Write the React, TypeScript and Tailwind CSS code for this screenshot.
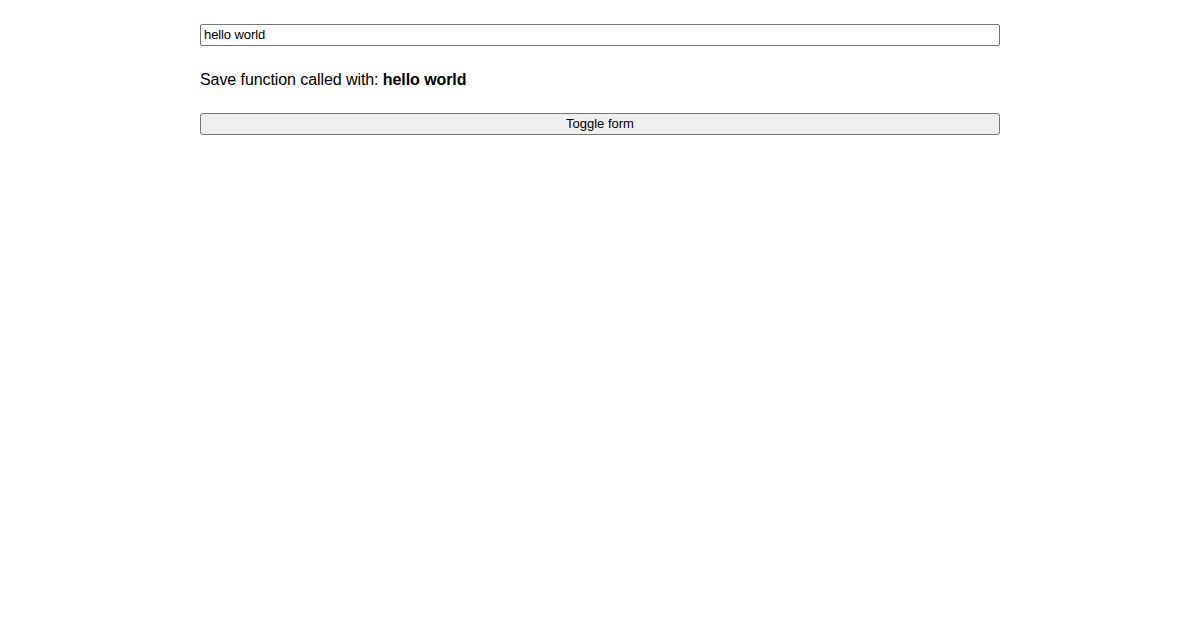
import { useState } from "react";

export default function App() {
  const [value, setValue] = useState("hello world");
  const [saved] = useState("hello world");
  const [show, setShow] = useState(true);

  return (
    <div className="w-[800px] mx-auto pt-6 font-['Liberation_Sans',Arial,sans-serif] text-black">
      {show && (
        <input
          type="text"
          value={value}
          onChange={(e) => setValue(e.target.value)}
          className="block w-full h-[22px] border border-[#767676] rounded-[2px] px-[3px] pb-[2px] text-[13px] tracking-[-0.1px] bg-white outline-none"
        />
      )}
      <p className="my-6 text-base leading-[19px] tracking-[-0.08px]">
        Save function called with: <b className="font-bold">{saved}</b>
      </p>
      <button
        type="button"
        onClick={() => setShow((s) => !s)}
        className="block w-full h-[22px] border border-[#767676] rounded-[3px] bg-[#efefef] pb-[2px] text-[13px] leading-none"
      >
        Toggle form
      </button>
    </div>
  );
}
